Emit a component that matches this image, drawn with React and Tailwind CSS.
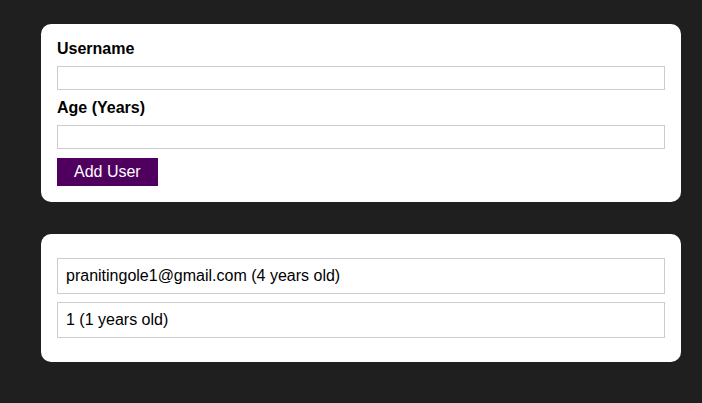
export default function App() {
  const users = [
    { id: 'u1', name: 'pranitingole1@gmail.com', age: 4 },
    { id: 'u2', name: '1', age: 1 },
  ];

  return (
    <div className="min-h-[403px] bg-[#1f1f1f] pt-[24px] pb-[41px] font-['Liberation_Sans',Arial,sans-serif]">
      {/* Add user form */}
      <form
        className="ml-[41px] w-[640px] rounded-[10px] bg-white p-4"
        onSubmit={(e) => e.preventDefault()}
      >
        <label className="mb-2 block text-base leading-[18px] font-bold text-black">Username</label>
        <input
          type="text"
          className="mb-[9px] block h-6 w-full border border-[#cccccc] px-1 text-base outline-none"
        />
        <label className="mb-2 block text-base leading-[18px] font-bold text-black">Age (Years)</label>
        <input
          type="number"
          className="block h-6 w-full border border-[#cccccc] px-1 text-base outline-none"
        />
        <button
          type="submit"
          className="mt-[9px] h-7 bg-[#4f005f] px-[17px] text-base leading-[18px] text-white"
        >
          Add User
        </button>
      </form>

      {/* User list */}
      <div className="mt-8 ml-[41px] w-[640px] rounded-[10px] bg-white p-4">
        <ul className="my-2 flex flex-col gap-2">
          {users.map((user) => (
            <li
              key={user.id}
              className="border border-[#cccccc] p-2 text-base leading-[18px] text-black"
            >
              {user.name} ({user.age} years old)
            </li>
          ))}
        </ul>
      </div>
    </div>
  );
}
